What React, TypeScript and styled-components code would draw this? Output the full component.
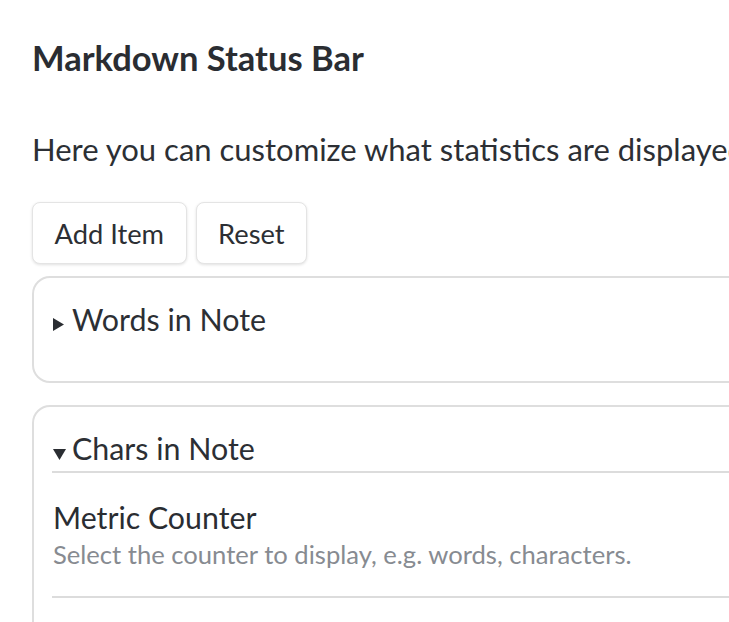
import React from "react";
import styled, { createGlobalStyle } from "styled-components";

const GlobalStyle = createGlobalStyle`
  html, body {
    margin: 0;
    padding: 0;
    background: #ffffff;
    overflow: hidden;
  }
  body {
    font-family: Lato, "Noto Sans", sans-serif;
    color: #2c2f34;
  }
`;

const Page = styled.div`
  width: 1400px;
  padding: 38px 0 0 32px;
`;

const Title = styled.h2`
  margin: 0;
  font-size: 34.5px;
  line-height: 40px;
  font-weight: 700;
  color: #2a2d32;
`;

const Intro = styled.p`
  margin: 51px 0 0;
  font-size: 31px;
  line-height: 40px;
  white-space: nowrap;
`;

const ButtonRow = styled.div`
  display: flex;
  gap: 9px;
  margin-top: 33px;
`;

const Button = styled.button`
  height: 62px;
  padding: 0 21.5px;
  font-family: inherit;
  font-size: 27.3px;
  color: #2c2f34;
  background: #ffffff;
  border: 1px solid #e4e4e4;
  border-radius: 8px;
  box-shadow: 0 1px 3px rgba(0, 0, 0, 0.12);
  cursor: pointer;
`;

const ItemCard = styled.div<{ $first?: boolean }>`
  margin-top: ${(p) => (p.$first ? "12px" : "22px")};
  width: 1300px;
  padding: 21px 0 ${(p) => (p.$first ? "37px" : "40px")} 18px;
  border: 2px solid #dedede;
  border-radius: 18px;
`;

const Summary = styled.div<{ $open?: boolean }>`
  display: flex;
  align-items: baseline;
  padding-bottom: 3px;
  font-size: 30.4px;
  line-height: 40px;
  border-bottom: 2px solid ${(p) => (p.$open ? "#dcdcdc" : "transparent")};
`;

const Caret = styled.svg<{ $open?: boolean }>`
  flex: none;
  margin: 0 ${(p) => (p.$open ? "6px" : "8px")} 0 1px;
  fill: #2a2d32;
`;

const SettingItem = styled.div`
  padding: 26px 0 26px 1px;
  border-bottom: 2px solid #dcdcdc;
`;

const SettingName = styled.div`
  font-size: 30.3px;
  line-height: 36px;
  color: #2a2d32;
`;

const SettingDesc = styled.div`
  margin-top: 3px;
  font-size: 25.6px;
  line-height: 32px;
  color: #878b91;
`;

const ClosedCaret = () => (
  <Caret width="11" height="13" viewBox="0 0 11 13">
    <path d="M0 0 L11 6.5 L0 13 Z" />
  </Caret>
);

const OpenCaret = () => (
  <Caret $open width="13" height="11" viewBox="0 0 13 11">
    <path d="M0 0 L13 0 L6.5 11 Z" />
  </Caret>
);

export default function App() {
  return (
    <>
      <GlobalStyle />
      <Page>
        <Title>Markdown Status Bar</Title>
        <Intro>
          Here you can customize what statistics are displayed on the status
          bar.
        </Intro>
        <ButtonRow>
          <Button>Add Item</Button>
          <Button>Reset</Button>
        </ButtonRow>

        <ItemCard $first>
          <Summary>
            <ClosedCaret />
            Words in Note
          </Summary>
        </ItemCard>

        <ItemCard>
          <Summary $open>
            <OpenCaret />
            Chars in Note
          </Summary>
          <SettingItem>
            <SettingName>Metric Counter</SettingName>
            <SettingDesc>
              Select the counter to display, e.g. words, characters.
            </SettingDesc>
          </SettingItem>
        </ItemCard>
      </Page>
    </>
  );
}
